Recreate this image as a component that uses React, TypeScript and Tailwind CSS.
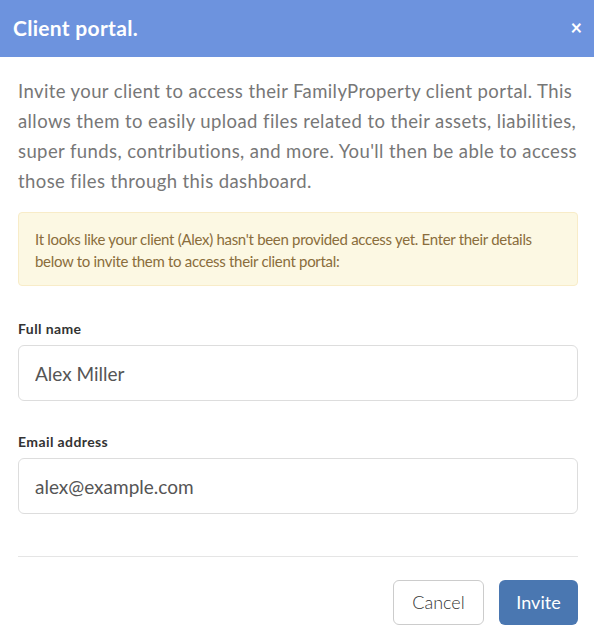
import React from "react";

export default function App() {
  return (
    <div className="w-[594px] h-[642px] bg-white overflow-hidden" style={{ fontFamily: '"Source Sans Pro", Lato, "Noto Sans", sans-serif' }}>
      {/* header */}
      <div className="h-[57px] bg-[#6d93de] flex items-center justify-between pl-[13px] pr-[12px]">
        <h2 className="text-white text-[21px] font-bold tracking-[0.3px] pb-[1px]" style={{ fontFamily: 'Lato, "Open Sans", sans-serif' }}>
          Client portal.
        </h2>
        <button className="text-white text-[20px] font-bold leading-none pb-[4px]">×</button>
      </div>

      <div className="pl-[18px] pr-[16px] pt-[19px]">
        <p className="text-[18.5px] leading-[30px] text-[#777] tracking-[0.4px]">
          Invite your client to access their FamilyProperty client portal. This allows them to easily upload files related to their assets, liabilities, super funds, contributions, and more. You'll then be able to access those files through this dashboard.
        </p>

        <div className="mt-[16px] h-[74px] bg-[#fcf8e3] border border-[#f8ecc8] rounded-[4px] px-[16px] pt-[15px] text-[15px] leading-[22px] text-[#8a6d3b] tracking-[-0.3px]">
          It looks like your client (Alex) hasn't been provided access yet. Enter their details below to invite them to access their client portal:
        </div>

        <div className="mt-[33px]">
          <label className="block text-[14px] font-bold text-[#333] leading-[20px] tracking-[0.4px]">Full name</label>
          <input
            defaultValue="Alex Miller"
            className="mt-[6px] w-full h-[56px] border border-[#ddd] rounded-[6px] px-[16px] text-[19px] text-[#555] outline-none"
          />
        </div>

        <div className="mt-[31px]">
          <label className="block text-[14px] font-bold text-[#333] leading-[20px] tracking-[0.4px]">Email address</label>
          <input
            defaultValue="alex@example.com"
            className="mt-[6px] w-full h-[56px] border border-[#ddd] rounded-[6px] px-[16px] text-[19px] text-[#555] outline-none"
          />
        </div>

        <div className="mt-[42px] border-t border-[#e5e5e5]" />

        <div className="flex justify-end gap-[15px] mt-[23px]" style={{ fontFamily: 'Lato, "Open Sans", sans-serif' }}>
          <button className="h-[45px] w-[91px] border border-[#ccc] rounded-[6px] bg-white text-[#333] text-[18px] font-light">Cancel</button>
          <button className="h-[45px] w-[79px] rounded-[6px] bg-[#4a77b1] text-white text-[18px]">Invite</button>
        </div>
      </div>
    </div>
  );
}
